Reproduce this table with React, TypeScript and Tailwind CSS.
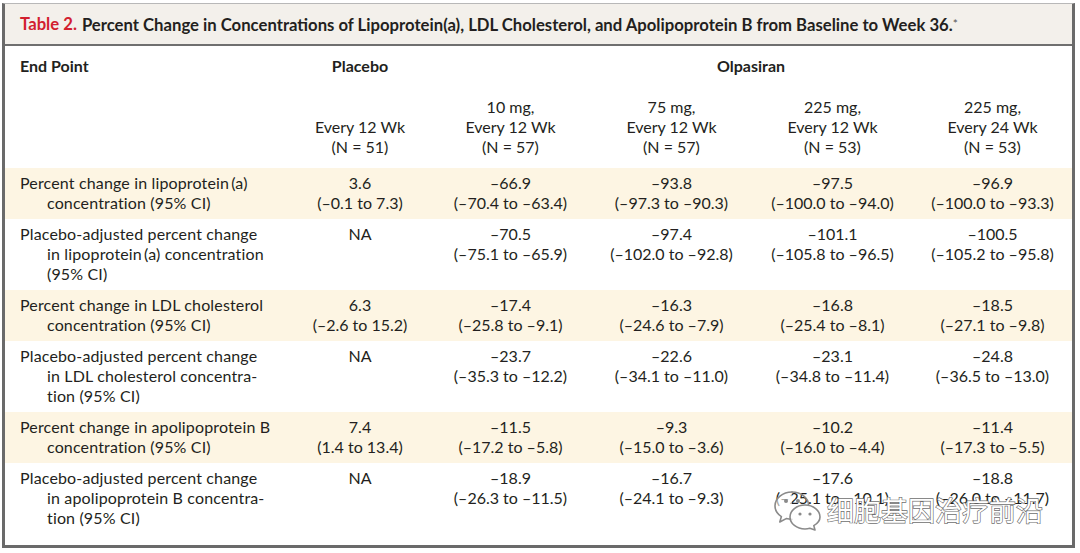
import React from "react";

type Row = {
  label: string[];
  shaded: boolean;
  cells: string[][];
};

const rows: Row[] = [
  {
    label: ["Percent change in lipoprotein\u2009(a)", "concentration (95% CI)"],
    shaded: true,
    cells: [
      ["3.6", "(–0.1 to 7.3)"],
      ["–66.9", "(–70.4 to –63.4)"],
      ["–93.8", "(–97.3 to –90.3)"],
      ["–97.5", "(–100.0 to –94.0)"],
      ["–96.9", "(–100.0 to –93.3)"],
    ],
  },
  {
    label: ["Placebo-adjusted percent change", "in lipoprotein\u2009(a) concentration", "(95% CI)"],
    shaded: false,
    cells: [
      ["NA"],
      ["–70.5", "(–75.1 to –65.9)"],
      ["–97.4", "(–102.0 to –92.8)"],
      ["–101.1", "(–105.8 to –96.5)"],
      ["–100.5", "(–105.2 to –95.8)"],
    ],
  },
  {
    label: ["Percent change in LDL cholesterol", "concentration (95% CI)"],
    shaded: true,
    cells: [
      ["6.3", "(–2.6 to 15.2)"],
      ["–17.4", "(–25.8 to –9.1)"],
      ["–16.3", "(–24.6 to –7.9)"],
      ["–16.8", "(–25.4 to –8.1)"],
      ["–18.5", "(–27.1 to –9.8)"],
    ],
  },
  {
    label: ["Placebo-adjusted percent change", "in LDL cholesterol concentra-", "tion (95% CI)"],
    shaded: false,
    cells: [
      ["NA"],
      ["–23.7", "(–35.3 to –12.2)"],
      ["–22.6", "(–34.1 to –11.0)"],
      ["–23.1", "(–34.8 to –11.4)"],
      ["–24.8", "(–36.5 to –13.0)"],
    ],
  },
  {
    label: ["Percent change in apolipoprotein B", "concentration (95% CI)"],
    shaded: true,
    cells: [
      ["7.4", "(1.4 to 13.4)"],
      ["–11.5", "(–17.2 to –5.8)"],
      ["–9.3", "(–15.0 to –3.6)"],
      ["–10.2", "(–16.0 to –4.4)"],
      ["–11.4", "(–17.3 to –5.5)"],
    ],
  },
  {
    label: ["Placebo-adjusted percent change", "in apolipoprotein B concentra-", "tion (95% CI)"],
    shaded: false,
    cells: [
      ["NA"],
      ["–18.9", "(–26.3 to –11.5)"],
      ["–16.7", "(–24.1 to –9.3)"],
      ["–17.6", "(–25.1 to –10.1)"],
      ["–18.8", "(–26.0 to –11.7)"],
    ],
  },
];

const groups = [
  ["Every 12 Wk", "(N = 51)"],
  ["10 mg,", "Every 12 Wk", "(N = 57)"],
  ["75 mg,", "Every 12 Wk", "(N = 57)"],
  ["225 mg,", "Every 12 Wk", "(N = 53)"],
  ["225 mg,", "Every 24 Wk", "(N = 53)"],
];

const cols = "grid grid-cols-[285px_140px_161px_161px_161px_1fr]";

function WeChatMark() {
  return (
    <svg width="50" height="42" viewBox="0 0 50 42" fill="none">
      <path
        d="M19 3C9.6 3 2 9.2 2 16.8c0 4.4 2.5 8.3 6.4 10.8L6.8 33l6.4-3.4c1.8.5 3.8.8 5.8.8"
        stroke="#8a8a8a"
        strokeWidth="1.6"
        fill="rgba(255,255,255,0.6)"
        strokeLinecap="round"
        strokeLinejoin="round"
      />
      <path
        d="M35.5 16c0-7.2-7.4-13-16.5-13"
        stroke="#8a8a8a"
        strokeWidth="1.6"
        strokeLinecap="round"
      />
      <path
        d="M32 16c-8.3 0-15 5.4-15 12s6.7 12 15 12c1.700 0 3.3-.2 4.8-.7L42 41l-1.2-4.4c3.9-2.2 6.2-5.4 6.2-8.6 0-6.6-6.7-12-15-12z"
        stroke="#8a8a8a"
        strokeWidth="1.6"
        fill="rgba(255,255,255,0.75)"
        strokeLinejoin="round"
      />
      <circle cx="13" cy="12" r="2" fill="#8a8a8a" />
      <circle cx="25" cy="12" r="2" fill="#8a8a8a" />
      <circle cx="27" cy="25" r="1.6" fill="#8a8a8a" />
      <circle cx="37" cy="25" r="1.6" fill="#8a8a8a" />
    </svg>
  );
}

export default function App() {
  return (
    <div className="w-[1080px] h-[553px] bg-white pl-[2px] pt-[3px] font-['Lato','Liberation_Sans',sans-serif] text-[16px] leading-[20px] text-[#231f20]">
      <div className="relative w-[1073px] h-[545px] border-t border-t-[#b8b8b8] border-x-[3px] border-b-[3px] border-x-[#6a6a6a] border-b-[#6a6a6a] bg-white">
        {/* title */}
        <div className="h-[42px] border-b-2 border-[#6f6f6f] bg-[#f3f0eb] pl-[15px] flex items-center font-bold text-[16.7px]">
          <span className="text-[#d2202f] mr-[5px]">Table 2.</span>
          <span>
            Percent Change in Concentrations of Lipoprotein(a), LDL Cholesterol, and Apolipoprotein B from Baseline to Week 36.
            <span className="font-normal align-[3px] text-[12px] text-[#555]">*</span>
          </span>
        </div>

        {/* header */}
        <div className={`${cols} pt-[10px] font-bold`}>
          <div className="pl-[15px]">End Point</div>
          <div className="text-center">Placebo</div>
          <div className="col-span-4 text-center">Olpasiran</div>
        </div>
        <div className={`${cols} pt-[21px] pb-[11px]`}>
          <div />
          {groups.map((g, i) => (
            <div key={i} className="flex flex-col justify-end items-center">
              {g.map((t, j) => (
                <div key={j}>{t}</div>
              ))}
            </div>
          ))}
        </div>

        {/* body */}
        {rows.map((r, i) => (
          <div
            key={i}
            className={`${cols} pt-[5px] pb-[6px] ${r.shaded ? "bg-[#fdf5e3]" : ""}`}
          >
            <div className="pl-[15px] tracking-[0.15px]">
              {r.label.map((l, j) => (
                <div key={j} className={j > 0 ? "pl-[27px]" : ""}>
                  {l}
                </div>
              ))}
            </div>
            {r.cells.map((c, j) => (
              <div key={j} className="text-center">
                {c.map((t, k) => (
                  <div key={k}>{t}</div>
                ))}
              </div>
            ))}
          </div>
        ))}

        {/* watermark */}
        <div className="absolute left-[768px] top-[485px] flex items-center gap-[4px]">
          <WeChatMark />
          <span className="font-['Noto_Sans_CJK_SC',sans-serif] text-[27px] leading-[30px] text-white [-webkit-text-stroke:1.3px_#6e6e6e] [paint-order:stroke_fill]">
            细胞基因治疗前沿
          </span>
        </div>
      </div>
    </div>
  );
}
